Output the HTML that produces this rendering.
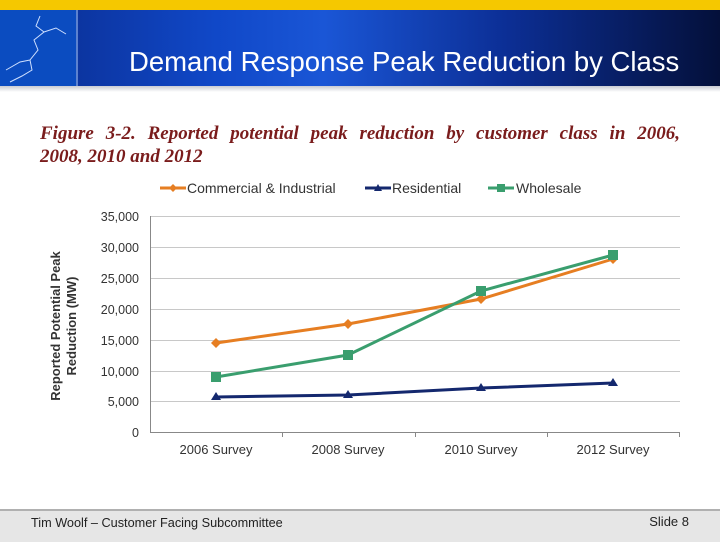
<!DOCTYPE html>
<html><head><meta charset="utf-8"><style>
body{margin:0;width:720px;height:540px;overflow:hidden;background:#fff;position:relative;font-family:"Liberation Sans",sans-serif}
.y{position:absolute;left:0;top:0;width:720px;height:10px;background:#f5c800}
.h{position:absolute;left:0;top:10px;width:720px;height:76px;background:linear-gradient(90deg,#0a2a8a 0%,#1048c8 30%,#1a56d6 45%,#0c2f96 70%,#04103a 100%)}
.sq{position:absolute;left:0;top:10px;width:76px;height:76px;background:#0b4cc0;border-right:2px solid #5c82d0}
.t{position:absolute;left:129px;top:46px;color:#fff;font-size:27.5px;white-space:nowrap}
.sh{position:absolute;left:0;top:86px;width:720px;height:6px;background:linear-gradient(#c8cbd2,#fff)}
.f{position:absolute;left:0;top:509px;width:720px;height:31px;background:#e6e6e6;border-top:2px solid #b0b0b0}
.fl{position:absolute;left:31px;top:516px;font-size:12.7px;color:#222}
.fr{position:absolute;right:31px;top:514px;font-size:13px;color:#222}
.fig{position:absolute;left:40px;width:640px;font-family:"Liberation Serif",serif;font-style:italic;font-weight:bold;color:#7a1c1c;font-size:19px;line-height:23px;white-space:nowrap}
.j{text-align:justify;text-align-last:justify}
</style></head><body>
<div class="y"></div><div class="h"></div><div class="sq">
<svg width="76" height="76"><path d="M40 6 L36 16 L44 22 L34 30 L38 40 L30 50 L32 60 L22 66 L10 72 M44 22 L56 18 L66 24 M30 50 L20 52 L6 60" stroke="#cfe0ff" stroke-width="1" fill="none"/></svg></div>
<div class="t">Demand Response Peak Reduction by Class</div>
<div class="sh"></div>
<div class="fig j" style="top:122px">Figure 3-2. Reported potential peak reduction by customer class in 2006,</div>
<div class="fig" style="top:145px">2008, 2010 and 2012</div>
<svg style="position:absolute;left:0;top:0" width="720" height="540" font-family="Liberation Sans,sans-serif">
<g stroke="#c8c8c8" stroke-width="1">
<line x1="150" y1="216.5" x2="680" y2="216.5"/><line x1="150" y1="247.5" x2="680" y2="247.5"/><line x1="150" y1="278.5" x2="680" y2="278.5"/><line x1="150" y1="309.5" x2="680" y2="309.5"/><line x1="150" y1="340.5" x2="680" y2="340.5"/><line x1="150" y1="371.5" x2="680" y2="371.5"/><line x1="150" y1="401.5" x2="680" y2="401.5"/>
</g>
<g stroke="#888"><line x1="150.5" y1="216" x2="150.5" y2="432"/><line x1="150" y1="432.5" x2="680" y2="432.5"/>
<line x1="282.5" y1="432" x2="282.5" y2="437"/><line x1="415.5" y1="432" x2="415.5" y2="437"/><line x1="547.5" y1="432" x2="547.5" y2="437"/><line x1="679.5" y1="432" x2="679.5" y2="437"/></g>
<g font-size="12.5" fill="#333" text-anchor="end">
<text x="139" y="221">35,000</text><text x="139" y="252">30,000</text><text x="139" y="283">25,000</text><text x="139" y="314">20,000</text><text x="139" y="345">15,000</text><text x="139" y="376">10,000</text><text x="139" y="406">5,000</text><text x="139" y="437">0</text></g>
<g font-size="13" fill="#333" text-anchor="middle">
<text x="216" y="454">2006 Survey</text><text x="348" y="454">2008 Survey</text><text x="481" y="454">2010 Survey</text><text x="613" y="454">2012 Survey</text></g>
<text transform="translate(60,326) rotate(-90)" font-size="13" font-weight="bold" fill="#333" text-anchor="middle">Reported Potential Peak</text>
<text transform="translate(76,326) rotate(-90)" font-size="13" font-weight="bold" fill="#333" text-anchor="middle">Reduction (MW)</text>
<polyline points="216,343 348,324 481,299 613,259" stroke="#e67e22" stroke-width="3" fill="none"/>
<g fill="#e67e22"><path d="M216 338l5 5-5 5-5-5z"/><path d="M348 319l5 5-5 5-5-5z"/><path d="M481 294l5 5-5 5-5-5z"/><path d="M613 254l5 5-5 5-5-5z"/></g>
<polyline points="216,397 348,395 481,388 613,383" stroke="#14286e" stroke-width="3" fill="none"/>
<g fill="#14286e"><path d="M216 392l5 8h-10z"/><path d="M348 390l5 8h-10z"/><path d="M481 383l5 8h-10z"/><path d="M613 378l5 8h-10z"/></g>
<polyline points="216,377 348,355 481,291 613,255" stroke="#3a9e6e" stroke-width="3" fill="none"/>
<g fill="#3a9e6e"><rect x="211" y="372" width="10" height="10"/><rect x="343" y="350" width="10" height="10"/><rect x="476" y="286" width="10" height="10"/><rect x="608" y="250" width="10" height="10"/></g>
<g font-size="14" fill="#333">
<line x1="160" y1="188" x2="186" y2="188" stroke="#e67e22" stroke-width="3"/><path d="M173 184l4 4-4 4-4-4z" fill="#e67e22"/><text x="187" y="193">Commercial &amp; Industrial</text>
<line x1="365" y1="188" x2="391" y2="188" stroke="#14286e" stroke-width="3"/><path d="M378 184l4 7h-8z" fill="#14286e"/><text x="392" y="193">Residential</text>
<line x1="488" y1="188" x2="514" y2="188" stroke="#3a9e6e" stroke-width="3"/><rect x="497" y="184" width="8" height="8" fill="#3a9e6e"/><text x="516" y="193">Wholesale</text>
</g>
</svg>
<div class="f"></div>
<div class="fl">Tim Woolf – Customer Facing Subcommittee</div>
<div class="fr">Slide 8</div>
</body></html>
